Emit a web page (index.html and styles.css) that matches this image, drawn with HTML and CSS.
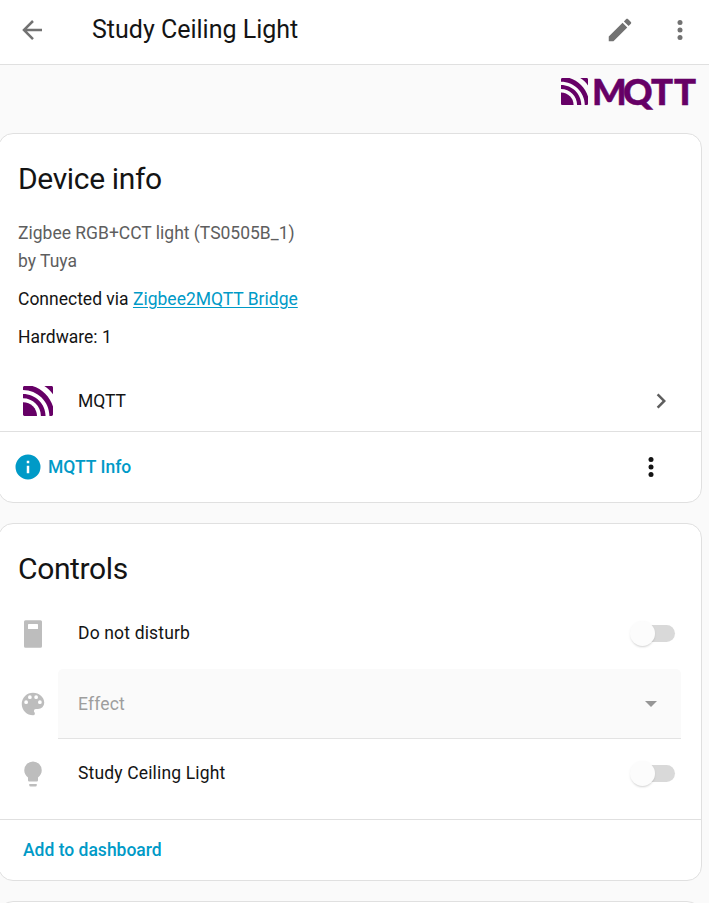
FILE: index.html
```html
<!DOCTYPE html>
<html lang="en">
<head>
<meta charset="utf-8">
<title>Study Ceiling Light</title>
<link rel="stylesheet" href="styles.css">
</head>
<body>
<svg width="0" height="0" class="defs">
  <symbol id="mqtt-mark" viewBox="0 0 27 27">
    <path d="M0 14.600C7 14.600 12.600 20.200 12.600 27H1.300C.6 27 0 26.400 0 25.700Z"/>
    <path d="M0 7.100V11.100C8.900 11.100 16.100 18.200 16.100 27H20.300C20.300 16 11.200 7.100 0 7.100Z"/>
    <path d="M0 1.300V3.700C12.900 3.700 23.800 14.200 23.800 27H25.700C26.400 27 27 26.400 27 25.700V18.500C24.300 9.800 17.300 2.700 8.500 0H1.300C.6 0 0 .6 0 1.300Z"/>
    <path d="M19.200 0C22.200 1.900 25 4.600 27 7.500V1.300C27 .6 26.400 0 25.700 0Z"/>
  </symbol>
  <symbol id="dots" viewBox="0 0 24 24">
    <circle cx="12" cy="6" r="2"/><circle cx="12" cy="12" r="2"/><circle cx="12" cy="18" r="2"/>
  </symbol>
</svg>

<header class="toolbar">
  <svg class="icon" viewBox="0 0 24 24"><path d="M20,11V13H8L13.5,18.5L12.08,19.92L4.16,12L12.08,4.08L13.5,5.5L8,11H20Z"/></svg>
  <h1 class="toolbar-title">Study Ceiling Light</h1>
  <svg class="icon edit" viewBox="0 0 24 24"><path d="M20.71,7.04C21.1,6.65 21.1,6 20.71,5.63L18.37,3.29C18,2.9 17.35,2.9 16.96,3.29L15.12,5.12L18.87,8.87M3,17.25V21H6.75L17.81,9.93L14.06,6.18L3,17.25Z"/></svg>
  <svg class="icon"><use href="#dots"/></svg>
</header>

<div class="brand">
  <svg class="brand-mark"><use href="#mqtt-mark"/></svg>
  <svg class="brand-name" viewBox="0 0 112 50"><text x="0 31 59 82" y="34.700">MQTT</text></svg>
</div>

<main class="cards">
  <section class="card">
    <h2 class="card-title">Device info</h2>
    <div class="details">
      <p class="model">Zigbee RGB+CCT light (TS0505B_1)<br>by Tuya</p>
      <p>Connected via <a href="#">Zigbee2MQTT Bridge</a></p>
      <p>Hardware: 1</p>
    </div>
    <div class="integration">
      <svg class="integration-mark"><use href="#mqtt-mark"/></svg>
      <span class="label">MQTT</span>
      <svg class="icon chevron" viewBox="0 0 24 24"><path d="M8.59,16.58L13.17,12L8.59,7.41L10,6L16,12L10,18L8.59,16.58Z"/></svg>
    </div>
    <div class="actions info-actions">
      <svg class="icon info" viewBox="0 0 24 24"><path d="M13,9H11V7H13M13,17H11V11H13M12,2A10,10 0 0,0 2,12A10,10 0 0,0 12,22A10,10 0 0,0 22,12A10,10 0 0,0 12,2Z"/></svg>
      <span class="action">MQTT Info</span>
      <svg class="icon overflow"><use href="#dots"/></svg>
    </div>
  </section>

  <section class="card">
    <h2 class="card-title">Controls</h2>
    <div class="row">
      <svg class="icon state" viewBox="0 0 24 24"><path fill-rule="evenodd" d="M6,1H18A1.200,1.200 0 0,1 19.200,2.200V21.800A1.200,1.200 0 0,1 18,23H6A1.200,1.200 0 0,1 4.800,21.800V2.200A1.200,1.200 0 0,1 6,1M8.500,4A.5,.5 0 0,0 8,4.500V7.500A.5,.5 0 0,0 8.500,8H15.500A.5,.5 0 0,0 16,7.500V4.500A.5,.5 0 0,0 15.500,4Z"/></svg>
      <span class="label">Do not disturb</span>
      <span class="switch"></span>
    </div>
    <div class="row select-row">
      <svg class="icon state" viewBox="0 0 24 24"><path d="M17.5,12A1.5,1.5 0 0,1 16,10.5A1.5,1.5 0 0,1 17.5,9A1.5,1.5 0 0,1 19,10.5A1.5,1.5 0 0,1 17.5,12M14.5,8A1.5,1.5 0 0,1 13,6.5A1.5,1.5 0 0,1 14.5,5A1.5,1.5 0 0,1 16,6.5A1.5,1.5 0 0,1 14.5,8M9.5,8A1.5,1.5 0 0,1 8,6.5A1.5,1.5 0 0,1 9.5,5A1.5,1.5 0 0,1 11,6.5A1.5,1.5 0 0,1 9.5,8M6.5,12A1.5,1.5 0 0,1 5,10.5A1.5,1.5 0 0,1 6.5,9A1.5,1.5 0 0,1 8,10.5A1.5,1.5 0 0,1 6.5,12M12,3A9,9 0 0,0 3,12A9,9 0 0,0 12,21A1.5,1.5 0 0,0 13.5,19.500C13.5,19.11 13.35,18.76 13.11,18.5C12.88,18.23 12.73,17.88 12.73,17.5A1.5,1.5 0 0,1 14.23,16H16A5,5 0 0,0 21,11C21,6.58 16.97,3 12,3Z"/></svg>
      <div class="select"><span>Effect</span><i class="caret"></i></div>
    </div>
    <div class="row">
      <svg class="icon state" viewBox="0 0 24 24"><path d="M12,2A7,7 0 0,0 5,9C5,11.38 6.19,13.47 8,14.74V17A1,1 0 0,0 9,18H15A1,1 0 0,0 16,17V14.74C17.81,13.47 19,11.38 19,9A7,7 0 0,0 12,2M9,21A1,1 0 0,0 10,22H14A1,1 0 0,0 15,21V20H9V21Z"/></svg>
      <span class="label">Study Ceiling Light</span>
      <span class="switch"></span>
    </div>
    <div class="actions add-actions"><span class="action">Add to dashboard</span></div>
  </section>

  <section class="card next"></section>
</main>
</body>
</html>
```
FILE: styles.css
```css
* { box-sizing: border-box; }

body {
  margin: 0;
  background: #fafafa;
  color: #141414;
  font: 400 17.5px/28px Roboto, "Liberation Sans", sans-serif;
}

h1, h2, p { margin: 0; font-weight: 400; }

.defs { display: block; height: 0; }

.icon { flex: none; width: 30px; height: 30px; fill: currentColor; }

.toolbar {
  display: flex;
  align-items: center;
  height: 65px;
  padding: 0 14px 5px 17px;
  background: #fff;
  border-bottom: 1px solid #e0e0e0;
  color: #727272;
}

.toolbar-title {
  flex: 1;
  margin-left: 45px;
  color: #141414;
  font-size: 25px;
}

.edit { margin-right: 30px; }

.brand {
  display: flex;
  height: 68px;
  padding: 5px 5px 0 0;
  justify-content: flex-end;
  fill: #660066;
}

.brand-mark { width: 27px; height: 27px; margin: 8px 4px 0 0; }

.brand-name {
  width: 112px;
  height: 50px;
  font: 900 36.5px Lato, sans-serif;
  stroke: #660066;
  stroke-width: .5px;
}

.cards {
  display: flex;
  flex-direction: column;
  gap: 20px;
  height: 770px;
  margin: 0 7px 0 -2px;
  overflow: hidden;
}

.card {
  flex: none;
  background: #fff;
  border: 1px solid #e0e0e0;
  border-radius: 15px;
}

.card.next { height: 60px; }

.card-title {
  padding: 15px 19px 0;
  font-size: 30px;
  line-height: 60px;
  letter-spacing: -0.36px;
}

.details {
  display: grid;
  gap: 10px;
  padding: 10px 19px 0;
}

.model { color: #5e5e5e; }

a { color: #009ac7; text-underline-offset: 2px; }

.integration {
  display: flex;
  align-items: center;
  height: 60px;
  margin-top: 20px;
  padding: 0 25px 0 24px;
}

.integration-mark { width: 30px; height: 30px; margin-right: 25px; fill: #660066; }

.label { flex: 1; }

.chevron { color: #5e5e5e; }

.actions {
  display: flex;
  align-items: center;
  border-top: 1px solid #e0e0e0;
}

.action { flex: 1; color: #009ac7; font-weight: 500; }

.info-actions { height: 71px; padding: 0 35px 0 14px; }
.info { margin-right: 5px; color: #009ac7; }

.row {
  display: flex;
  align-items: center;
  height: 50px;
  margin-top: 10px;
  padding: 0 26px 0 19px;
  letter-spacing: .16px;
}

.row .label, .row .switch { margin-bottom: 2px; }

.state { margin-right: 30px; color: #bdbdbd; }

.select-row { height: 70px; padding-right: 20px; }
.select-row .state { margin-right: 10px; }

.select {
  display: flex;
  flex: 1;
  align-items: center;
  justify-content: space-between;
  height: 70px;
  padding: 0 24px 0 20px;
  background: #fafafa;
  border-bottom: 1px solid #e3e3e3;
  border-radius: 5px 5px 0 0;
  color: #9e9e9e;
}

.caret {
  border: 6px solid transparent;
  border-top-color: #969696;
  border-bottom: 0;
}

.switch {
  display: flex;
  align-items: center;
  width: 42px;
  height: 17px;
  border-radius: 9px;
  background: #d9d9d9;
}

.switch::before {
  content: "";
  width: 25px;
  height: 25px;
  margin-left: -3px;
  border-radius: 50%;
  background: #fcfcfc;
  box-shadow: 0 2px 2px -1px rgba(0, 0, 0, .12), 0 1px 3px rgba(0, 0, 0, .06);
}

.add-actions { height: 61px; margin-top: 20px; padding: 0 24px; }
```
